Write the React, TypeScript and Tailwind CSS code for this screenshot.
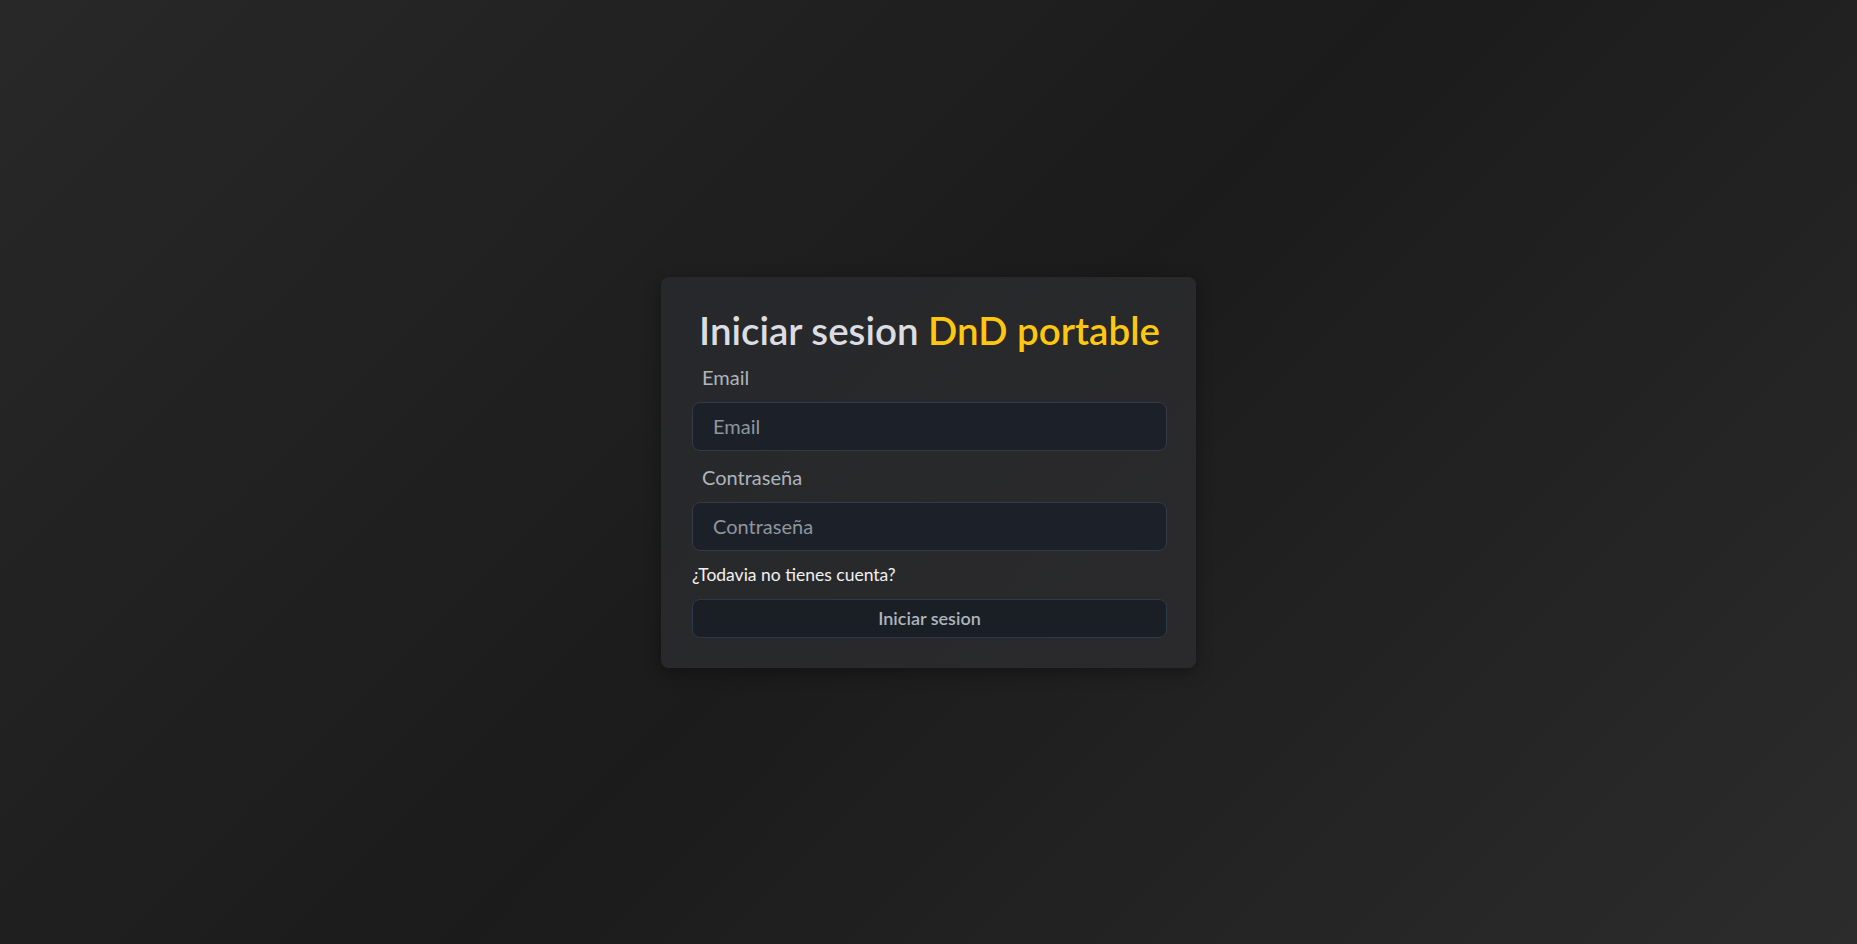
import * as React from "react";

// ========================================
// Login page
// ========================================

const fontStack = { fontFamily: "'Segoe UI', Lato, 'Noto Sans', sans-serif" };

function Field({ label, type, placeholder }: { label: string; type: string; placeholder: string }) {
  return (
    <div className="flex flex-col">
      <label className="mb-[10px] pl-[10px] text-[20px] leading-[30px] text-[#adb5bd]">{label}</label>
      <input
        type={type}
        placeholder={placeholder}
        className="h-[49px] w-full rounded-[8px] border border-[#343b45] bg-[#1c2129] px-[20px] text-[20px] text-[#dee2e6] placeholder:text-[#8f969e] outline-none"
      />
    </div>
  );
}

export default function App() {
  return (
    <div
      className="flex min-h-screen items-center justify-center bg-[linear-gradient(135deg,#282828_0%,#1b1b1b_50%,#2c2c2c_100%)]"
      style={fontStack}
    >
      <div className="w-[535px] rounded-[8px] bg-[linear-gradient(135deg,#27282b_0%,#2a2a2c_100%)] pl-[31px] pr-[29px] pt-[29px] pb-[30px] shadow-[0_4px_16px_rgba(0,0,0,0.35)]">
        <h1 className="mb-[8px] whitespace-nowrap text-center text-[38.5px] font-semibold leading-[48px] text-[#dcdde2]">
          Iniciar sesion <span className="text-[#ffc70f]">DnD portable</span>
        </h1>

        <div className="flex flex-col gap-[11px]">
          <Field label="Email" type="email" placeholder="Email" />
          <Field label="Contraseña" type="password" placeholder="Contraseña" />
        </div>

        <p className="mt-[12px] text-[17.5px] leading-[24px] text-[#f1f1f1]">¿Todavia no tienes cuenta?</p>

        <button className="mt-[12px] h-[39px] w-full rounded-[8px] border border-[#2e3a49] bg-[#1a1e25] text-[18px] font-semibold text-[#adb5bd]">
          Iniciar sesion
        </button>
      </div>
    </div>
  );
}
